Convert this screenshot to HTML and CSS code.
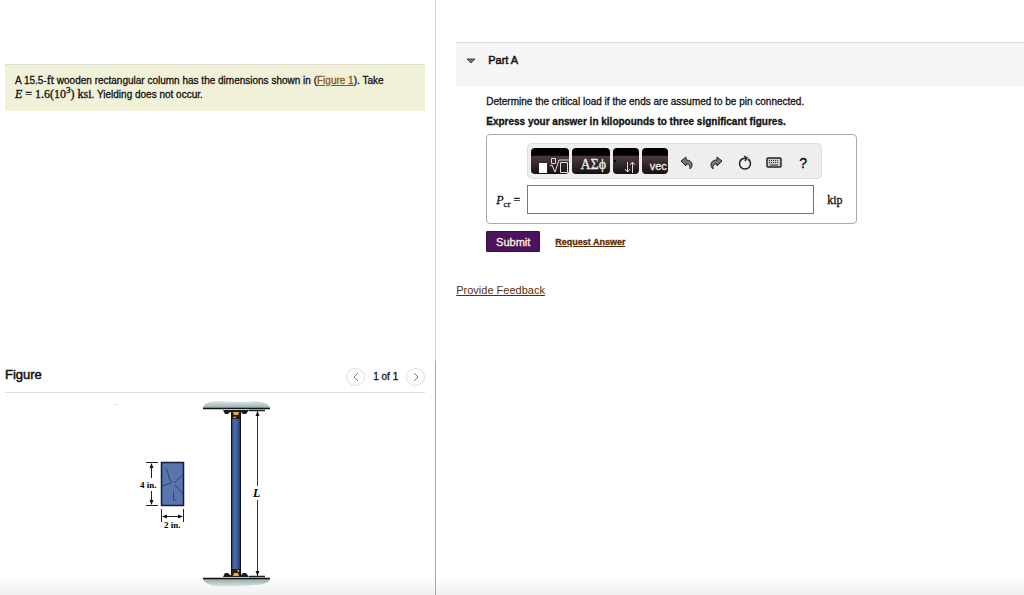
FILE: index.html
```html
<!doctype html>
<html lang="en">
<head>
    <meta charset="UTF-8">
    <title>Part A</title>
    <link rel="stylesheet" href="styles.css">
</head>
<body>
    <div class="page">
        <aside class="left">
            <section class="problem">
                <p class="prompt">A 15.5-<span class="math">ft</span> wooden rectangular column has the dimensions shown in (<a href="#figure">Figure 1</a>). Take<br>
                <span class="math"><i>E</i> = 1.6(10<sup>3</sup>) ksi</span>. Yielding does not occur.</p>
            </section>
            <section class="figure" id="figure">
                <div class="figure-head">
                    <h2>Figure</h2>
                    <div class="pager">
                        <button type="button" class="round" aria-label="Previous figure">
                            <svg width="8" height="10" viewBox="0 0 8 10"><path d="M6 1L2 5l4 4"/></svg>
                        </button>
                        <span>1 of 1</span>
                        <button type="button" class="round" aria-label="Next figure">
                            <svg width="8" height="10" viewBox="0 0 8 10"><path d="M2 1l4 4-4 4"/></svg>
                        </button>
                    </div>
                </div>
                <svg class="drawing" width="160" height="192" viewBox="115 398 160 192" role="img" aria-label="Column of length L with a 4 in. by 2 in. section">
                    <defs>
                        <linearGradient id="top" x1="0" y1="0" x2="0" y2="1">
                            <stop offset="0" stop-color="#dfe9e9"/>
                            <stop offset="1" stop-color="#93adae"/>
                        </linearGradient>
                        <linearGradient id="bottom" x1="0" y1="0" x2="0" y2="1">
                            <stop offset="0" stop-color="#93adae"/>
                            <stop offset="1" stop-color="#dfe9e9"/>
                        </linearGradient>
                        <linearGradient id="column">
                            <stop offset="0" stop-color="#1c2b4c"/>
                            <stop offset=".3" stop-color="#4a6cab"/>
                            <stop offset=".65" stop-color="#3d5c9b"/>
                            <stop offset="1" stop-color="#1b2949"/>
                        </linearGradient>
                    </defs>
                    <path d="M115 404.500h3" stroke="#ddd"/>
                    <!-- section -->
                    <rect x="161.500" y="462.500" width="22" height="43" fill="#5875ad" stroke="#111c35" stroke-width="1.500"/>
                    <path d="M166 468l2 5 1 5 3 5M183 475l-5 4-4 4M162 486l6-2 3-1M175 485l4 4 4 5M173.500 491v9h3" fill="none" stroke="#2c447a"/>
                    <path d="M146 462.500h12M146 505.500h12M151.500 464v14M151.500 491v13M161.500 509v13M183.500 509v13M163 516.500h19" stroke="#222" fill="none"/>
                    <path d="M151.500 463l-2 5h4zM151.500 505l-2-5h4zM162 516.500l5-2v4zM183 516.500l-5-2v4z" fill="#111"/>
                    <text x="140" y="488" class="dim">4 in.</text>
                    <text x="164" y="528" class="dim">2 in.</text>
                    <!-- supports -->
                    <path d="M203 408c1-5 6-7 15-7 12 0 24 2 36 0 8 0 15 3 16 7z" fill="url(#top)"/>
                    <path d="M203 579h67c-2 4-7 6-16 6-14 2-24 1-36 1-8 0-13-3-15-7z" fill="url(#bottom)"/>
                    <path d="M203 408.500h67M203 578.500h67" stroke="#111" stroke-width="1.500"/>
                    <rect x="231" y="417" width="10" height="153" fill="url(#column)"/>
                    <path d="M231.500 410v167M240.500 410v167" stroke="#0b1224"/>
                    <path d="M223 410h26l-3 4h-3l-2-2h-11l-2 2h-3zM223 577h26l-3-4h-3l-2 2h-11l-2-2h-3z" fill="#1a1c20"/>
                    <path d="M232 412h8v7h-8zM232 569h8v8h-8z" fill="#2a2013"/>
                    <path d="M233 412h6l-1 3h-4zM233 576h6l-1-3h-4zM233 418l2-2 1 2zM237 570l1 2h1v-2z" fill="#e7ac4d"/>
                    <path d="M249 410.500h16M249 576.500h16" stroke="#222" stroke-width="1.500"/>
                    <path d="M257.500 411v75M257.500 500v76" stroke="#333"/>
                    <path d="M257.500 411l-2 5h4zM257.500 576l-2-5h4z" fill="#111"/>
                    <text x="253" y="497" class="length">L</text>
                </svg>
            </section>
        </aside>
        <main class="right">
            <header class="part">
                <svg width="10" height="6" viewBox="0 0 10 6"><path d="M1 1h8L5 5z" fill="#777" stroke="#444"/></svg>
                <h1>Part A</h1>
            </header>
            <form class="question">
                <p>Determine the critical load if the ends are assumed to be pin connected.</p>
                <p class="express">Express your answer in kilopounds to three significant figures.</p>
                <div class="answer">
                    <div class="toolbar">
                        <button type="button" class="dark wide" aria-label="Templates">
                            <svg width="38" height="26" viewBox="0 0 38 26" fill="none" stroke="#ddd">
                                <path d="M8 15h8v10H8z" fill="#fff" stroke="none"/>
                                <path d="M20.500 10.500h4v5h-4zM19 18l2-1 3 7 4-12h10M29.500 14.500h7v10h-7z"/>
                            </svg>
                        </button>
                        <button type="button" class="dark wide greek">ΑΣϕ</button>
                        <button type="button" class="dark" aria-label="Subscript and superscript">
                            <svg width="26" height="26" viewBox="0 0 26 26" fill="none" stroke="#ddd">
                                <path d="M14.500 14v10M12 21l2.500 3 2.500-3M19.500 25V14M17 17l2.500-3 2.500 3"/>
                                <path d="M1 12h2v2H1z" fill="#000" stroke="none"/>
                            </svg>
                        </button>
                        <button type="button" class="dark vec">vec</button>
                        <div class="tools">
                            <button type="button" class="plain" aria-label="Undo">
                                <svg width="14" height="14" viewBox="0 0 14 14"><path d="M1 5l5-4v3c4 0 6 2 6 5 0 2-1 3-2 4 0-4-1-5-4-5v2z" fill="#777" stroke="#222"/></svg>
                            </button>
                            <button type="button" class="plain" aria-label="Redo">
                                <svg width="14" height="14" viewBox="0 0 14 14"><path d="M13 5L8 1v3C4 4 2 6 2 9c0 2 1 3 2 4 0-4 1-5 4-5v2z" fill="#777" stroke="#222"/></svg>
                            </button>
                            <button type="button" class="plain" aria-label="Reset">
                                <svg width="14" height="16" viewBox="0 0 14 16" fill="none" stroke="#222" stroke-width="1.500"><path d="M10 4a5.500 5.500 0 1 1-6 0l4-1"/><path d="M6 1l3 2-2 3"/></svg>
                            </button>
                            <button type="button" class="plain" aria-label="Keyboard">
                                <svg width="16" height="12" viewBox="0 0 16 12"><rect x="1" y="1" width="14" height="9" rx="1" fill="#ccc" stroke="#222" stroke-width="1.500"/><path d="M3 3.500h10M3 5.500h10" stroke="#333" stroke-dasharray="1 1"/><path d="M4 8h8" stroke="#333"/></svg>
                            </button>
                            <button type="button" class="plain help" aria-label="Help">?</button>
                        </div>
                    </div>
                    <label class="math" for="load"><i>P</i><sub>cr</sub> =</label>
                    <input type="text" id="load">
                    <span class="math unit">kip</span>
                </div>
                <div class="actions">
                    <button type="submit" class="submit">Submit</button>
                    <a href="#answer">Request Answer</a>
                </div>
            </form>
            <a class="feedback" href="#feedback">Provide Feedback</a>
        </main>
    </div>
</body>
</html>
```

FILE: styles.css
```css
*{
    box-sizing: border-box;
    margin: 0;
    padding: 0;
}
body{
    font-family: "Liberation Sans", Arial, sans-serif;
    font-size: 10px;
    line-height: 14px;
    color: #111;
    background: #fff;
}
button{
    font: inherit;
    border: 0;
    cursor: pointer;
}
svg{
    display: block;
}
a{
    color: #5b2f05;
}
.page{
    display: flex;
    min-height: 100vh;
}
/* soft shade over the bottom edge of the window */
.page::after{
    content: "";
    position: fixed;
    left: 0;
    right: 0;
    bottom: 0;
    height: 18px;
    background: linear-gradient(rgba(0,0,0,0), rgba(0,0,0,.06));
    pointer-events: none;
}
.left{
    flex: 0 0 42.6%;
    display: grid;
    grid-template-rows: 361fr 234fr;
}
.problem{
    padding: 64px 10px 0 5px;
    border-right: 1px solid #e4cfbb;
}
.prompt{
    padding: 9px 10px;
    background: #f1f1da;
    border-top: 1px solid #deded0;
    -webkit-text-stroke: .3px;
}
.prompt a{
    color: #8a5a14;
}
.math{
    font-family: "Liberation Serif", "Times New Roman", serif;
    font-size: 12px;
    line-height: 12px;
}
sup,sub{
    font-size: 9px;
    line-height: 0;
}
.figure{
    padding: 4px 10px 0 5px;
    border-right: 1px solid #c8a68a;
}
.figure-head{
    display: flex;
    justify-content: space-between;
    align-items: center;
    height: 28px;
    border-bottom: 1px solid #ddd;
}
.figure-head h2{
    font-size: 13px;
    font-weight: normal;
    -webkit-text-stroke: .5px;
    padding-bottom: 8px;
}
.pager{
    display: flex;
    align-items: center;
    gap: 8px;
    padding-bottom: 4px;
    -webkit-text-stroke: .3px;
}
.round{
    display: flex;
    align-items: center;
    justify-content: center;
    width: 19px;
    height: 18px;
    border: 1px solid #ddd;
    border-radius: 50%;
    background: #fff;
}
.round path{
    fill: none;
    stroke: #777;
}
.drawing{
    margin: 5px 0 0 110px;
}
.dim,.length{
    font-family: "Liberation Serif", "Times New Roman", serif;
    font-weight: bold;
    font-size: 9px;
}
.length{
    font-style: italic;
    font-size: 12px;
}
.right{
    flex: 1;
    padding: 42px 0 0 20px;
}
.part{
    display: flex;
    gap: 12px;
    height: 44px;
    padding: 10px;
    background: #f5f5f5;
    border-top: 1px solid #ddd;
}
.part svg{
    margin-top: 5px;
}
.part h1{
    font-size: 11px;
    font-weight: normal;
    -webkit-text-stroke: .5px;
}
.question{
    padding: 9px 0 0 30px;
    -webkit-text-stroke: .3px;
}
.question p{
    margin-bottom: 6px;
}
.question .express{
    font-weight: bold;
    margin-bottom: 5px;
}
.answer{
    display: grid;
    grid-template-columns: 32px 1fr 34px;
    row-gap: 6px;
    align-items: center;
    max-width: 371px;
    padding: 8px 8px 9px;
    border: 1px solid #aaa;
    border-radius: 4px;
}
.toolbar{
    grid-column: 2 / 4;
    justify-self: start;
    display: flex;
    align-items: center;
    gap: 3px;
    height: 36px;
    padding: 0 3px;
    background: #eee;
    border: 1px solid #ddd;
    border-radius: 5px;
}
.tools{
    display: flex;
    gap: 3px;
    padding: 3px 2px 0 3px;
}
.dark{
    width: 26px;
    height: 26px;
    overflow: hidden;
    border-radius: 4px;
    color: #eee;
    background: linear-gradient(#000 28%, #4b3a3e 32%, #171012);
}
.wide{
    width: 38px;
}
.greek{
    font-family: "Liberation Serif", "Times New Roman", serif;
    font-size: 14px;
    padding: 8px 0 0 4px;
}
.vec{
    font-size: 11px;
    padding: 10px 0 0 6px;
}
.plain{
    display: flex;
    align-items: center;
    justify-content: center;
    width: 26px;
    height: 26px;
    background: none;
}
.help{
    font-size: 14px;
}
.answer label{
    padding-left: 1px;
    white-space: nowrap;
}
.answer input{
    width: 100%;
    height: 29px;
    padding: 0 6px;
    border: 1px solid #94772f;
    background: #fff;
}
.unit{
    padding-left: 13px;
}
.actions{
    display: flex;
    align-items: center;
    gap: 15px;
    margin-top: 7px;
}
.submit{
    width: 54px;
    height: 21px;
    font-size: 11px;
    color: #fff3dc;
    background: #4c145e;
    border: 1px solid #3a0d3a;
    border-radius: 1px;
}
.actions a{
    font-size: 9px;
    font-weight: bold;
}
.feedback{
    display: inline-block;
    margin-top: 31px;
    font-size: 11px;
}
```
